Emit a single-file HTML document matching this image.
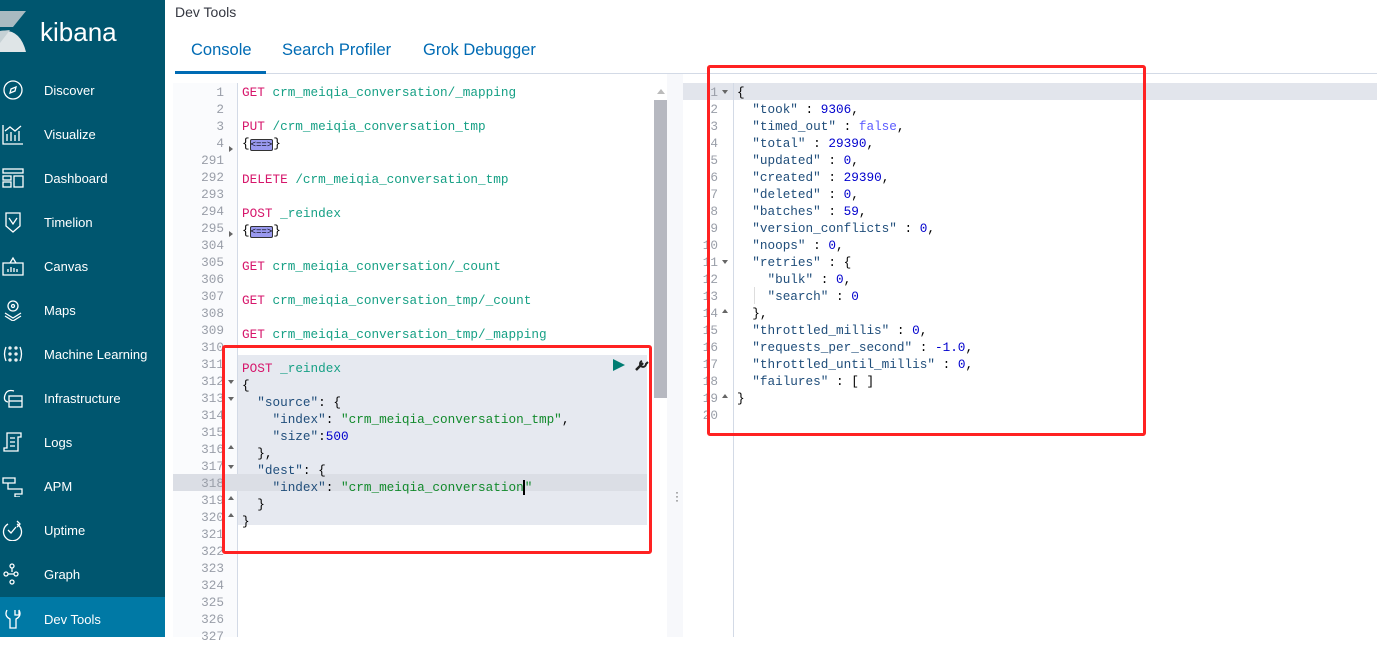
<!DOCTYPE html>
<html><head><meta charset="utf-8"><style>
*{margin:0;padding:0;box-sizing:border-box}
body{width:1377px;height:637px;overflow:hidden;background:#fff;font-family:"Liberation Sans",sans-serif;position:relative}
#sb{position:absolute;left:0;top:0;width:165px;height:637px;background:#00566f}
.nav{position:absolute;left:0;width:165px;height:44px;color:#fff;font-size:13px}
.nav span{position:absolute;left:44px;top:15px}
.nav svg{position:absolute;left:2px;top:11px}
.act{background:#0079a5}
.t{position:absolute;font-size:16.5px;color:#006bb4}
.m{font-family:"Liberation Mono",monospace;font-size:12.7px;position:absolute;white-space:pre;line-height:17px}
.ln{color:#999ea8;text-align:right;width:52px}
.k{color:#d6166b}.u{color:#16a085}.s{color:#128a2c}.n{color:#0000cd}.p{color:#000}.q{color:#1f4d7a}.b{color:#5c5cff}
.red{position:absolute;border:3px solid #f22;border-radius:3px}
.fold{position:absolute;width:0;height:0;border-left:3px solid transparent;border-right:3px solid transparent}
.fd{border-top:4px solid #666}.fu{border-bottom:4px solid #666}
</style></head><body>
<div id="sb">
<svg style="position:absolute;left:0;top:10px" width="30" height="42"><polygon points="0,1 26,1 13,17 0,17" fill="#a9bac1"/><path d="M0,21 Q20,18 26,42 L0,42Z" fill="#dfe5e7"/><path d="M0,21 L10,20 L0,33Z" fill="#c6d1d5"/></svg>
<div style="position:absolute;left:40px;top:17px;color:#fff;font-size:26px">kibana</div>
<div class="nav" style="top:68px"><svg width="22" height="22" fill="none" stroke="#fff" stroke-width="1.3"><circle cx="11" cy="11" r="9"/><path d="M14,8 L9,10 L8,14 L13,12Z"/></svg><span>Discover</span></div>
<div class="nav" style="top:112px"><svg width="22" height="22" fill="none" stroke="#fff" stroke-width="1.3"><path d="M1,2V21H21M5,18V11M9,18V9M13,18V12M17,18V8M3,8L8,4L13,8L19,3"/></svg><span>Visualize</span></div>
<div class="nav" style="top:156px"><svg width="22" height="22" fill="none" stroke="#fff" stroke-width="1.3"><rect x="1" y="2" width="20" height="4"/><rect x="1" y="9" width="8" height="4"/><rect x="1" y="15" width="8" height="5"/><rect x="12" y="9" width="9" height="11"/></svg><span>Dashboard</span></div>
<div class="nav" style="top:200px"><svg width="22" height="22" fill="none" stroke="#fff" stroke-width="1.3"><path d="M4,2H18V15L11,21L4,15Z M7,7L11,13L15,7"/></svg><span>Timelion</span></div>
<div class="nav" style="top:244px"><svg width="22" height="22" fill="none" stroke="#fff" stroke-width="1.3"><path d="M1,8H21V20H1Z M8,8L11,3L14,8 M6,17V14M9,17V12M12,17V13M15,17V14"/></svg><span>Canvas</span></div>
<div class="nav" style="top:288px"><svg width="22" height="22" fill="none" stroke="#fff" stroke-width="1.3"><circle cx="11" cy="7" r="5"/><circle cx="11" cy="7" r="1.5"/><path d="M3,14L11,19L19,14M3,17L11,22L19,17"/></svg><span>Maps</span></div>
<div class="nav" style="top:332px"><svg width="22" height="22" fill="none" stroke="#fff" stroke-width="1.3"><path d="M4,4Q1,11 4,18M18,4Q21,11 18,18"/><circle cx="8" cy="5" r="1"/><circle cx="14" cy="5" r="1"/><circle cx="8" cy="11" r="1"/><circle cx="14" cy="11" r="1"/><circle cx="8" cy="17" r="1"/><circle cx="14" cy="17" r="1"/></svg><span>Machine Learning</span></div>
<div class="nav" style="top:376px"><svg width="22" height="22" fill="none" stroke="#fff" stroke-width="1.3"><path d="M6,15Q1,14 3,8Q5,2 12,4"/><rect x="7" y="9" width="13" height="11"/><path d="M7,14H20"/></svg><span>Infrastructure</span></div>
<div class="nav" style="top:420px"><svg width="22" height="22" fill="none" stroke="#fff" stroke-width="1.3"><path d="M5,2H19V6H16V20H2V17H5Z M8,7H13M8,11H13M8,15H13"/></svg><span>Logs</span></div>
<div class="nav" style="top:464px"><svg width="22" height="22" fill="none" stroke="#fff" stroke-width="1.3"><path d="M1,3H13V8H1Z M6,8V14H20V19H13V22H18"/></svg><span>APM</span></div>
<div class="nav" style="top:508px"><svg width="22" height="22" fill="none" stroke="#fff" stroke-width="1.3"><path d="M15,5A9,9 0 1 1 6,5M6,11L9,14L14,8M15,2L18,5L15,8"/></svg><span>Uptime</span></div>
<div class="nav" style="top:552px"><svg width="22" height="22" fill="none" stroke="#fff" stroke-width="1.3"><circle cx="10" cy="3" r="2"/><circle cx="4" cy="11" r="2"/><circle cx="14" cy="11" r="2"/><circle cx="10" cy="19" r="2"/><path d="M6,11H12M10,5V9"/></svg><span>Graph</span></div>
<div class="nav act" style="top:597px;height:40px"><svg width="22" height="22" fill="none" stroke="#fff" stroke-width="1.3"><path d="M5,2Q2,8 8,11V20H14V11Q20,8 17,2V7H13V2"/></svg><span>Dev Tools</span></div>
</div>

<div style="position:absolute;left:175px;top:4px;font-size:14px;color:#343741">Dev Tools</div>
<div class="t" style="left:191px;top:41px">Console</div>
<div class="t" style="left:282px;top:41px">Search Profiler</div>
<div class="t" style="left:423px;top:41px">Grok Debugger</div>
<div style="position:absolute;left:175px;top:73px;width:1202px;height:1px;background:#d3dae6"></div>
<div style="position:absolute;left:175px;top:71px;width:91px;height:3px;background:#006bb4"></div>

<!-- left editor -->
<div style="position:absolute;left:173px;top:83px;width:64px;height:554px;background:#fafbfd"></div>
<div style="position:absolute;left:237px;top:83px;width:1px;height:554px;background:#d3dae6"></div>
<div style="position:absolute;left:238px;top:355px;width:409px;height:170px;background:#e6e9f0"></div>
<div style="position:absolute;left:173px;top:474px;width:474px;height:17px;background:#dbdee5"></div>
<div style="position:absolute;left:667px;top:74px;width:16px;height:563px;background:#f7f8fb"></div>
<div style="position:absolute;left:654px;top:100px;width:13px;height:298px;background:#b6b8c0"></div>
<div style="position:absolute;left:657px;top:89px;border-left:4px solid transparent;border-right:4px solid transparent;border-bottom:5px solid #bbb"></div>
<div style="position:absolute;left:675px;top:490px;color:#555;font-size:12px;line-height:4px">·<br>·<br>·</div>

<div class="m ln" style="left:172px;top:84px">1
2
3
4
291
292
293
294
295
304
305
306
307
308
309
310
311
312
313
314
315
316
317
318
319
320
321
322
323
324
325
326
327</div>
<div class="fold" style="left:229px;top:146px;border-left:4px solid #666;border-top:3px solid transparent;border-bottom:3px solid transparent;border-right:0"></div>
<div class="fold" style="left:229px;top:231px;border-left:4px solid #666;border-top:3px solid transparent;border-bottom:3px solid transparent;border-right:0"></div>
<div class="fold fd" style="left:228px;top:380px"></div>
<div class="fold fd" style="left:228px;top:397px"></div>
<div class="fold fu" style="left:228px;top:445px"></div>
<div class="fold fd" style="left:228px;top:465px"></div>
<div class="fold fu" style="left:228px;top:496px"></div>
<div class="fold fu" style="left:228px;top:513px"></div>
<div class="m" style="left:242px;top:84px"><span class="k">GET</span> <span class="u">crm_meiqia_conversation/_mapping</span>

<span class="k">PUT</span> <span class="u">/crm_meiqia_conversation_tmp</span>
{<span style="background:#9a9af0;border:1px solid #333;border-radius:2px;font-size:9px">&lt;==&gt;</span>}

<span class="k">DELETE</span> <span class="u">/crm_meiqia_conversation_tmp</span>

<span class="k">POST</span> <span class="u">_reindex</span>
{<span style="background:#9a9af0;border:1px solid #333;border-radius:2px;font-size:9px">&lt;==&gt;</span>}

<span class="k">GET</span> <span class="u">crm_meiqia_conversation/_count</span>

<span class="k">GET</span> <span class="u">crm_meiqia_conversation_tmp/_count</span>

<span class="k">GET</span> <span class="u">crm_meiqia_conversation_tmp/_mapping</span>

<span class="k">POST</span> <span class="u">_reindex</span>
{
  <span class="q">"source"</span>: {
    <span class="q">"index"</span>: <span class="s">"crm_meiqia_conversation_tmp"</span>,
    <span class="q">"size"</span>:<span class="n">500</span>
  },
  <span class="q">"dest"</span>: {
    <span class="q">"index"</span>: <span class="s">"crm_meiqia_conversation<span style="border-left:2px solid #000;margin-left:-1px">"</span></span>
  }
}</div>
<svg style="position:absolute;left:613px;top:358px" width="12" height="14"><polygon points="0,1 12,7 0,13" fill="#017d73"/></svg>
<svg style="position:absolute;left:635px;top:357px" width="14" height="14"><path d="M1,13L8,6" stroke="#222" stroke-width="2.5"/><path d="M7,4A3,3 0 1 0 11,7L13,5" stroke="#222" stroke-width="2" fill="none"/></svg>

<!-- right output -->
<div style="position:absolute;left:683px;top:83px;width:694px;height:17px;background:#e2e5ec"></div>
<div style="position:absolute;left:733px;top:83px;width:1px;height:554px;background:#d3dae6"></div>
<div style="position:absolute;left:754px;top:287px;width:1px;height:17px;background:#ddd"></div>
<div class="m ln" style="left:666px;top:84px">1
2
3
4
5
6
7
8
9
10
11
12
13
14
15
16
17
18
19
20</div>
<div class="fold fd" style="left:722px;top:90px"></div>
<div class="fold fd" style="left:722px;top:260px"></div>
<div class="fold fu" style="left:722px;top:309px"></div>
<div class="fold fu" style="left:722px;top:394px"></div>
<div class="m" style="left:737px;top:84px">{
  <span class="q">"took"</span> : <span class="n">9306</span>,
  <span class="q">"timed_out"</span> : <span class="b">false</span>,
  <span class="q">"total"</span> : <span class="n">29390</span>,
  <span class="q">"updated"</span> : <span class="n">0</span>,
  <span class="q">"created"</span> : <span class="n">29390</span>,
  <span class="q">"deleted"</span> : <span class="n">0</span>,
  <span class="q">"batches"</span> : <span class="n">59</span>,
  <span class="q">"version_conflicts"</span> : <span class="n">0</span>,
  <span class="q">"noops"</span> : <span class="n">0</span>,
  <span class="q">"retries"</span> : {
    <span class="q">"bulk"</span> : <span class="n">0</span>,
    <span class="q">"search"</span> : <span class="n">0</span>
  },
  <span class="q">"throttled_millis"</span> : <span class="n">0</span>,
  <span class="q">"requests_per_second"</span> : <span class="n">-1.0</span>,
  <span class="q">"throttled_until_millis"</span> : <span class="n">0</span>,
  <span class="q">"failures"</span> : [ ]
}</div>

<div class="red" style="left:222px;top:345px;width:430px;height:209px"></div>
<div class="red" style="left:707px;top:65px;width:439px;height:371px"></div>
</body></html>
